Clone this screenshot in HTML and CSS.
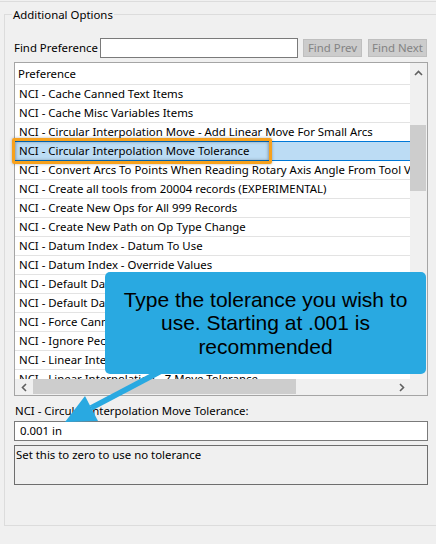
FILE: index.html
```html
<!DOCTYPE html>
<html>
<head>
<meta charset="utf-8">
<link rel="stylesheet" href="styles.css">
</head>
<body>
<div class="page">
  <div class="topline"></div>
  <div class="group">
    <span class="legend">Additional Options</span>
    <div class="find-row">
      <span class="find-label">Find Preference</span>
      <div class="find-input"></div>
      <button class="btn" disabled>Find Prev</button>
      <button class="btn" disabled>Find Next</button>
    </div>
    <div class="list">
      <div class="list-main">
        <div class="list-header">Preference</div>
        <div class="row">NCI - Cache Canned Text Items</div>
        <div class="row">NCI - Cache Misc Variables Items</div>
        <div class="row">NCI - Circular Interpolation Move - Add Linear Move For Small Arcs</div>
        <div class="row selected">NCI - Circular Interpolation Move Tolerance</div>
        <div class="row">NCI - Convert Arcs To Points When Reading Rotary Axis Angle From Tool Vector</div>
        <div class="row">NCI - Create all tools from 20004 records (EXPERIMENTAL)</div>
        <div class="row">NCI - Create New Ops for All 999 Records</div>
        <div class="row">NCI - Create New Path on Op Type Change</div>
        <div class="row">NCI - Datum Index - Datum To Use</div>
        <div class="row">NCI - Datum Index - Override Values</div>
        <div class="row">NCI - Default Datum Index</div>
        <div class="row">NCI - Default Datum Offset</div>
        <div class="row">NCI - Force Canned Cycles</div>
        <div class="row">NCI - Ignore Peck Clearance</div>
        <div class="row">NCI - Linear Interpolation Move Tolerance</div>
        <div class="row">NCI - Linear Interpolation - Z Move Tolerance</div>
      </div>
      <div class="vscroll">
        <div class="sb-btn sb-btn-v">
          <svg width="9" height="6" viewBox="0 0 9 6"><polyline points="1,5 4.5,1.5 8,5" class="chev"/></svg>
        </div>
        <div class="vthumb"></div>
      </div>
      <div class="hscroll">
        <div class="sb-btn sb-btn-h">
          <svg width="6" height="9" viewBox="0 0 6 9"><polyline points="5,1 1.5,4.5 5,8" class="chev"/></svg>
        </div>
        <div class="hthumb"></div>
        <div class="sb-btn sb-btn-h sb-right">
          <svg width="6" height="9" viewBox="0 0 6 9"><polyline points="1,1 4.5,4.5 1,8" class="chev"/></svg>
        </div>
      </div>
      <div class="corner"></div>
    </div>
    <div class="value-label">NCI - Circular Interpolation Move Tolerance:</div>
    <div class="value-input">0.001 in</div>
    <div class="desc">Set this to zero to use no tolerance</div>
  </div>

  <div class="highlight"></div>
  <svg class="arrow" width="436" height="544" viewBox="0 0 436 544">
    <line x1="91" y1="408" x2="165" y2="369" class="shaft"/>
    <polygon points="65,422 85,396 98,421" class="head"/>
  </svg>
  <div class="callout">
    <div class="callout-text">Type the tolerance you wish to<br>use. Starting at .001 is<br>recommended</div>
  </div>
</div>
</body>
</html>
```

FILE: styles.css
```css
html, body {
  margin: 0;
  padding: 0;
  overflow: hidden;
  background: #f0f0f0;
}
.page {
  position: relative;
  width: 436px;
  height: 544px;
  overflow: hidden;
  font-family: "Noto Sans", "Open Sans", sans-serif;
  font-size: 11.4px;
  color: #000;
}
.topline {
  height: 1px;
  margin-top: 1px;
  background: #dcdcdc;
}
.group {
  position: relative;
  box-sizing: border-box;
  margin: 12px 0 0 4px;
  width: 460px;
  height: 512px;
  border: 1px solid #dcdcdc;
  padding: 23px 0 0 9px;
}
.legend {
  position: absolute;
  top: -8px;
  left: 7px;
  padding: 0 1px;
  background: #f0f0f0;
  line-height: 16px;
}
.find-row {
  display: flex;
  align-items: center;
  height: 20px;
}
.find-label {
  width: 86px;
  line-height: 16px;
}
.find-input {
  box-sizing: border-box;
  width: 198px;
  height: 20px;
  background: #fff;
  border: 1px solid #7a7a7a;
}
.btn {
  box-sizing: border-box;
  width: 59px;
  height: 18px;
  margin: 0 0 0 5px;
  padding: 0;
  background: #cccccc;
  border: 1px solid #bfbfbf;
  color: #838383;
  font-family: inherit;
  font-size: 11.4px;
  line-height: 16px;
}
.btn + .btn {
  margin-left: 6px;
}
.list {
  box-sizing: border-box;
  margin-top: 4px;
  width: 414px;
  height: 334px;
  border: 1px solid #a5a5a5;
  display: grid;
  grid-template-columns: 1fr 17px;
  grid-template-rows: 1fr 16px;
  background: #fff;
}
.list-main {
  overflow: hidden;
  background: #fff;
}
.list-header {
  height: 21px;
  line-height: 21px;
  padding-left: 3px;
  border-bottom: 1px solid #e3e3e3;
}
.row {
  height: 18px;
  line-height: 18px;
  padding-left: 4px;
  border-bottom: 1px solid #e3e3e3;
  white-space: nowrap;
  overflow: hidden;
}
.row.selected {
  background: #bcdcf4;
  border-bottom-color: #0078d7;
  box-shadow: 0 -1px 0 #0078d7;
}
.vscroll {
  background: #f0f0f0;
  display: flex;
  flex-direction: column;
}
.sb-btn {
  display: flex;
  align-items: center;
  justify-content: center;
}
.sb-btn-v {
  height: 20px;
}
.sb-btn-h {
  width: 17px;
  height: 16px;
}
.chev {
  fill: none;
  stroke: #606060;
  stroke-width: 1.6;
}
.vthumb {
  margin-top: 42px;
  width: 16px;
  height: 66px;
  background: #cdcdcd;
}
.hscroll {
  background: #f0f0f0;
  display: flex;
  align-items: flex-start;
}
.hthumb {
  margin-left: 1px;
  width: 263px;
  height: 15px;
  background: #cdcdcd;
}
.sb-right {
  margin-left: auto;
}
.corner {
  background: #f0f0f0;
}
.value-label {
  margin-top: 7px;
  line-height: 16px;
  padding-left: 1px;
}
.value-input {
  box-sizing: border-box;
  margin-top: 2px;
  width: 414px;
  height: 20px;
  line-height: 18px;
  padding-left: 5px;
  background: #fff;
  border: 1px solid #7a7a7a;
}
.desc {
  box-sizing: border-box;
  margin-top: 4px;
  width: 414px;
  height: 40px;
  padding: 1px 0 0 1px;
  line-height: 16px;
  border: 1px solid #6e6e6e;
}
.highlight {
  position: absolute;
  left: 12px;
  top: 138px;
  width: 260px;
  height: 26px;
  box-sizing: border-box;
  border: 3px solid #f7a11c;
  border-radius: 2px;
  box-shadow: inset 0 0 3px 1px rgba(0, 0, 0, 0.3), 0 0 3px rgba(0, 0, 0, 0.3);
}
.arrow {
  position: absolute;
  left: 0;
  top: 0;
}
.shaft {
  stroke: #29a9e1;
  stroke-width: 5.5;
}
.head {
  fill: #29a9e1;
}
.callout {
  position: absolute;
  left: 105px;
  top: 272px;
  width: 321px;
  height: 102px;
  border-radius: 5px;
  background: #29a9e1;
  display: flex;
  align-items: center;
  justify-content: center;
}
.callout-text {
  font-family: "Liberation Sans", Arial, sans-serif;
  font-size: 21px;
  line-height: 23.5px;
  text-align: center;
  color: #000;
}
```
